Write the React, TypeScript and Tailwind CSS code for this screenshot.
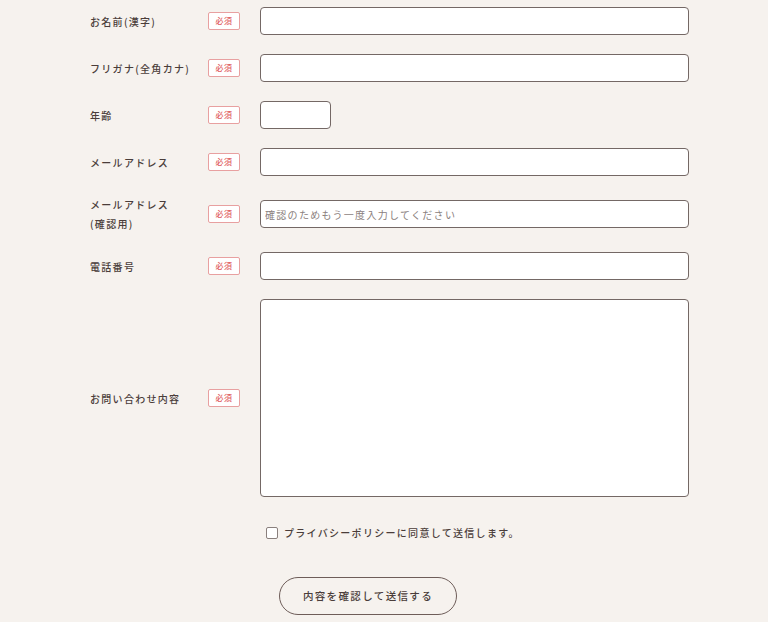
import React from "react";

const font = { fontFamily: '"Noto Sans CJK JP", "Noto Sans", sans-serif' };

const Badge = () => (
  <span className="flex h-[18px] w-[32px] shrink-0 items-center justify-center rounded-[2px] border border-[#e8a0a0] bg-white text-[8px] font-medium tracking-[0.05em] text-[#df5f5f]">
    必須
  </span>
);

const Row = ({
  label,
  children,
}: {
  label: React.ReactNode;
  children: React.ReactNode;
}) => (
  <div className="flex items-center">
    <div className="w-[118px] shrink-0 text-[10px] font-medium leading-[19px] tracking-[0.13em] text-[#4a3d3a]">
      {label}
    </div>
    <Badge />
    <div className="ml-[20px]">{children}</div>
  </div>
);

const inputCls =
  "block h-[28px] rounded-[4px] border border-[#746865] bg-white px-[4px] text-[10px] tracking-[0.13em] text-[#4a3d3a] outline-none placeholder:text-[#8a807d]";

export default function App() {
  return (
    <div className="min-h-[622px] bg-[#f6f2ee]" style={font}>
      <form className="pl-[90px] pt-[7px]">
        <div className="flex flex-col gap-[19px]">
          <Row label="お名前(漢字)">
            <input className={`${inputCls} w-[429px]`} />
          </Row>
          <Row label="フリガナ(全角カナ)">
            <input className={`${inputCls} w-[429px]`} />
          </Row>
          <Row label="年齢">
            <input className={`${inputCls} w-[71px]`} />
          </Row>
          <Row label="メールアドレス">
            <input className={`${inputCls} w-[429px]`} />
          </Row>
          <Row
            label={
              <>
                メールアドレス
                <br />
                (確認用)
              </>
            }
          >
            <input
              className={`${inputCls} w-[429px]`}
              placeholder="確認のためもう一度入力してください"
            />
          </Row>
          <Row label="電話番号">
            <input className={`${inputCls} w-[429px]`} />
          </Row>
          <Row label="お問い合わせ内容">
            <textarea
              className={`${inputCls} h-[198px] w-[429px] resize-none`}
            />
          </Row>
        </div>

        <label className="ml-[176px] mt-[28px] flex items-center gap-[6px] text-[10px] font-medium tracking-[0.13em] text-[#4a3d3a]">
          <span className="h-[12px] w-[12px] rounded-[2px] border border-[#8a807d] bg-white" />
          プライバシーポリシーに同意して送信します。
        </label>

        <button
          type="button"
          className="ml-[189px] mt-[37px] flex h-[38px] w-[178px] items-center justify-center rounded-full border-[1.5px] border-[#6e5d59] text-[10.5px] font-medium tracking-[0.13em] text-[#4a3d3a]"
        >
          内容を確認して送信する
        </button>
      </form>
    </div>
  );
}
